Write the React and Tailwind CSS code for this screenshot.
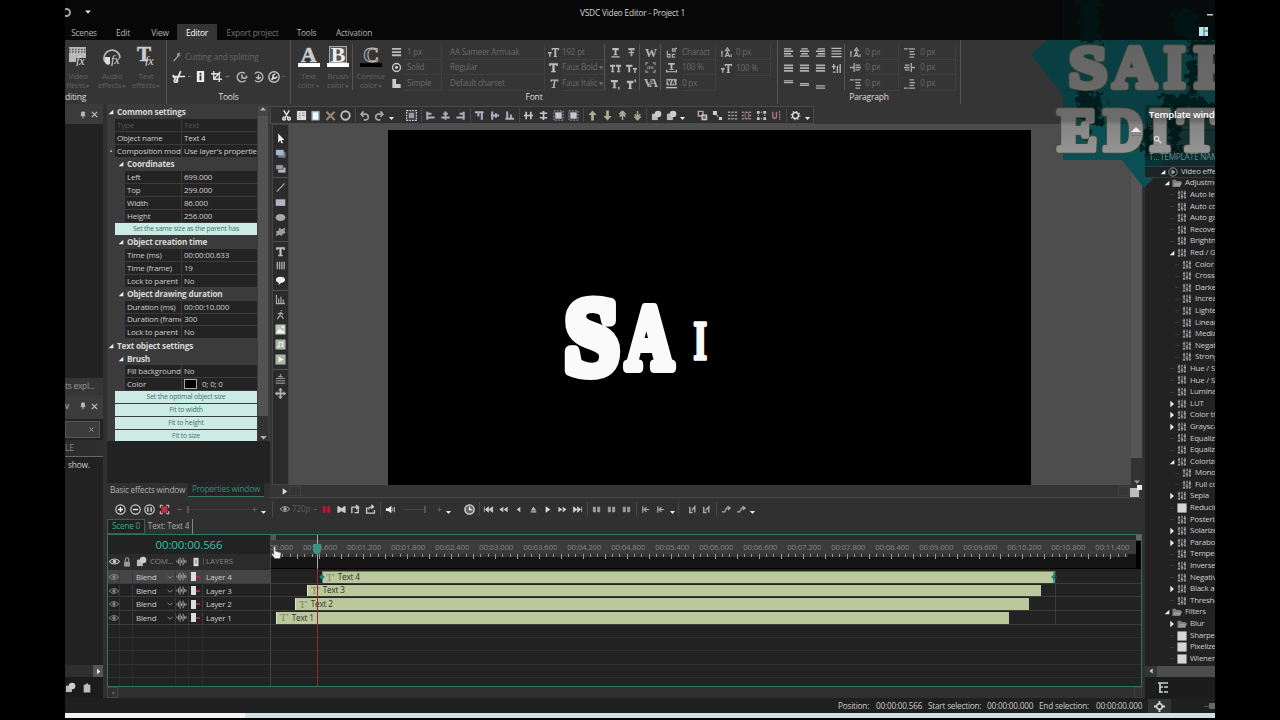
// 12x12 glyphs, drawn with the current text colour
const glyphs = {
  cut: <path d="M3 .5L7.500 8M9 .5L4.500 8M3.300 8a1.500 1.500 0 1 0 .1 0M8.700 8a1.500 1.500 0 1 0 .1 0" fill="none" stroke="#e4e4e4" strokeWidth="1.600" />,
  copy: <><path d="M1 1h10v10H1z" fill="#dcdcdc" /><path d="M3 3.500h2M6.500 3.500h3M3 6h2M6.500 6h3M3 8.500h2" stroke="#888" /></>,
  paste: <><path d="M1.500 1h9v10.500h-9z" fill="#8fa9b8" /><path d="M3 2.500h6v8H3z" fill="#f4f8fa" /></>,
  cross: <path d="M1.500 2l9 9M10.500 2l-9 9" stroke="#94867a" strokeWidth="2.400" />,
  x: <path d="M2.500 2.500l7 7M9.500 2.500l-7 7" stroke="currentColor" strokeWidth="1.700" />,
  ring: <circle cx="6" cy="6" r="4.600" fill="none" stroke="#b4bfc8" strokeWidth="2" />,
  undo: <path d="M2.500 4.500h5a3.200 3.200 0 0 1 0 6.300H5M5 1.500L2.200 4.500 5 7.500" fill="none" stroke="#a3aaa1" strokeWidth="1.700" />,
  redo: <path d="M9.500 4.500h-5a3.200 3.200 0 0 0 0 6.300H7M7 1.500l2.800 3L7 7.500" fill="none" stroke="#a3aaa1" strokeWidth="1.700" />,
  drop: <path d="M2.500 6.500h7L6 10.500z" fill="#e4e4e4" />,
  dash: <path d="M4 6h4" stroke="#777" strokeWidth="1.200" />,
  select: <><path d="M.7.700h10.600v10.600H.7z" fill="none" stroke="#ccc" strokeWidth="1.400" strokeDasharray="2 1" /><path d="M3 3h6v6H3z" fill="#9a9aaa" /></>,
  alignL: <path d="M2.500 2v8.500M2.500 4.200h4.500M2.500 8.300h8" stroke="#a9afb9" strokeWidth="2.200" />,
  alignC: <path d="M6 1.500v9M3.500 4.200h5M1.500 8.300h9" stroke="#a9afb9" strokeWidth="2.200" />,
  alignR: <path d="M9.500 2v8.500M5 4.200h4.500M1.500 8.300h8" stroke="#a9afb9" strokeWidth="2.200" />,
  alignT: <path d="M1 2.500h9.500M4.800 2.500v4.500M8.500 2.500v8" stroke="#a9afc9" strokeWidth="2.200" />,
  alignM: <path d="M3.500 1.500v9M7.500 3.500v5M2 6h9" stroke="#a9afc9" strokeWidth="2.200" />,
  alignB: <path d="M1.500 9.500h9.500M3.500 1.500v8M7.500 5v4.500" stroke="#a9afc9" strokeWidth="2.200" />,
  spaceH: <path d="M1 6h10M3.500 2v8M8.500 2v8" stroke="#c3c8d0" strokeWidth="1.800" />,
  spaceV: <path d="M6 1v10M2 3.500h8M2 8.500h8" stroke="#c3c8d0" strokeWidth="1.800" />,
  box: <><path d="M1 1h10v10H1z" fill="none" stroke="#aaa" strokeDasharray="2 1.300" /><path d="M2.500 2.500h7v7h-7z" fill="#c2c8d2" /></>,
  up: <path d="M6 .5l4.500 5H7.500V11.500H4.500V5.500H1.500z" fill="#9fb296" />,
  down: <path d="M6 11.500l4.500-5H7.500V.5H4.500v6H1.500z" fill="#9fb296" />,
  top: <path d="M6 1L2.500 5M6 1l3.500 4M6 3.500L3 7.500M6 3.500l3 4M6 2v9" stroke="#9fb296" strokeWidth="1.600" />,
  bottom: <path d="M6 11L2.500 7M6 11l3.500-4M6 8.500L3 4.500M6 8.500l3-4M6 10V1" stroke="#a3a98e" strokeWidth="1.600" />,
  shapes: <><path d="M1 4h6.500v7H1z" fill="#bbb" /><circle cx="7.700" cy="4.300" r="3.600" fill="#ccc" /></>,
  group: <><path d="M1.500 1.500h5v5h-5z" fill="none" stroke="#b9a2a8" strokeWidth="1.600" /><path d="M5.500 5.500h5v5h-5z" fill="#777" stroke="#d5c5c8" strokeWidth="1.400" /></>,
  ungroup: <><path d="M1 1h4.500v4.500H1zM7.500 7.500H11V11H7.500z" fill="#ccc" /><path d="M5 6.500h2" stroke="#b08b8b" strokeWidth="2" /></>,
  grid: <path d="M1 2.500h2.600M4.700 2.500h2.600M8.400 2.500H11M1 6h2.600M4.700 6h2.600M8.400 6H11M1 9.500h2.600M4.700 9.500h2.600M8.400 9.500H11" stroke="#999" strokeWidth="1.600" />,
  gridRed: <><path d="M1 2.500h2M5 2.500h2M9 2.500h2M1 6h2M9 6h2M1 9.500h2M5 9.500h2M9 9.500h2" stroke="#999" strokeWidth="1.500" /><path d="M4.500 2v8M8 2v8" stroke="#a87880" /></>,
  corners: <path d="M1 1h3v3H1zM8 1h3v3H8zM1 8h3v3H1zM8 8h3v3H8zM5.300 2h1.300v1H5.300zM5.300 9h1.300v1H5.300zM2 5.300h1v1.300H2zM9 5.300h1v1.300H9z" fill="#c8c8c8" />,
  magnet: <><path d="M2 2v5a2 2 0 0 0 4 0V2" fill="none" stroke="#a86f78" strokeWidth="1.700" /><path d="M9.500 1v10" stroke="#999" strokeWidth="1.300" strokeDasharray="2 1" /></>,
  gear: <><circle cx="6" cy="6" r="3.300" fill="none" stroke="#ddd" strokeWidth="1.500" /><circle cx="6" cy="6" r="4.700" fill="none" stroke="#ddd" strokeWidth="1.200" strokeDasharray="1.400 2.290" /></>,
  pointer: <path d="M3.500 .5v10l2.300-2.300 1.400 3.300 1.500-.7-1.500-3.200h3z" fill="#f2f2f2" />,
  layers: <><path d="M3.500 4.500h8v6h-8z" fill="#747d86" /><path d="M1 2h8.500v6H1z" fill="#a3b6c4" /></>,
  layers2: <><path d="M3.500 5h8v5.500h-8z" fill="#b9b9c4" /><path d="M1 2h8v5H1z" fill="#9998a8" stroke="#333" strokeWidth=".6" /></>,
  line: <path d="M2 10.500l8.500-9" stroke="#aaa" strokeWidth="1.300" />,
  rect: <path d="M.8 2.500h10.400v7.200H.8z" fill="#b6b2c2" />,
  oval: <ellipse cx="6" cy="6" rx="5.300" ry="3.700" fill="#a3aba1" />,
  blob: <path d="M1 6l3-1 .5-3 3 1.500L11 2l-.5 3.500L11.500 8l-3 .5-1 2.500-2.500-1.500L1 11l.8-3z" fill="#94a393" />,
  text: <path d="M1.500 1.500h9V4H9.300l-.5-1H6.900v7h1.300v1H3.800v-1h1.300V3H3.200l-.5 1H1.500z" fill="#c9c9c9" stroke="#c9c9c9" strokeWidth=".5" />,
  bars: <path d="M2.500 2v8M5 2v8M7.500 2v8M10 2v8" stroke="#aaa" strokeWidth="1.500" />,
  bubble: <path d="M6 2c3 0 5 1.400 5 3.300S9 8.600 6.500 8.700L4 10.800l.2-2.300C2.300 8.100 1 6.900 1 5.300 1 3.400 3 2 6 2z" fill="#eee" />,
  chart: <path d="M1.500 1v9.500H11M4 10V5M6.500 10V3M9 10V6" fill="none" stroke="#aaa" strokeWidth="1.300" />,
  run: <path d="M7 1v1.500M6.500 4L5 7.500l-2.500 3.500M5.500 7L8 8.500 9 11M3 5.500L6.500 4 9 6" fill="none" stroke="#aaa" strokeWidth="1.300" />,
  image: <><path d="M.5.500h11v11H.5z" fill="#b9c6b6" /><path d="M1 10l4-5 3 3 1-1 2 3z" fill="#f6f6f6" /><circle cx="8.500" cy="3.500" r="1.200" fill="#fff" /></>,
  music: <><path d="M.5.500h11v11H.5z" fill="#a9b6a4" /><path d="M4.500 8.500V3.500h4V8" fill="none" stroke="#eee" strokeWidth="1.200" /><path d="M2.800 7.500h2v2h-2zM6.800 7h2v2h-2z" fill="#eee" /></>,
  video: <><path d="M.5.500h11v11H.5z" fill="#a9b6a4" /><path d="M4 3l5 3-5 3z" fill="#fff" /></>,
  levels: <path d="M1 6h10M1 8.500h10M1 11h10M6 1v4M3.500 4h5" stroke="#8d978d" strokeWidth="1.200" />,
  move: <path d="M6 0l2 2.500H6.700v2.800h2.800V4L12 6 9.500 8V6.700H6.700v2.800H8L6 12 4 9.500h1.300V6.700H2.500V8L0 6l2.500-2v1.300h2.800V2.500H4z" fill="#b5b5b5" stroke="#b5b5b5" strokeWidth=".5" />,
  locate: <><circle cx="6" cy="6" r="3" fill="none" stroke="#ddd" strokeWidth="1.500" /><path d="M6 0v3M6 9v3M0 6h3M9 6h3" stroke="#ddd" strokeWidth="2" /></>,
  zoomIn: <><circle cx="6" cy="6" r="5.100" fill="none" stroke="#ccc" strokeWidth="1.300" /><path d="M3.300 6h5.400M6 3.300v5.400" stroke="#eee" strokeWidth="1.500" /></>,
  zoomOut: <><circle cx="6" cy="6" r="5.100" fill="none" stroke="#ccc" strokeWidth="1.300" /><path d="M3.300 6h5.400" stroke="#eee" strokeWidth="1.500" /></>,
  zoomFit: <><circle cx="6" cy="6" r="5.100" fill="none" stroke="#ccc" strokeWidth="1.300" /><path d="M4.200 3.500v5M7.800 3.500v5" stroke="#ccc" strokeWidth="1.600" /></>,
  rec: <><path d="M3 2.500h6v7H3z" fill="#c2304c" /><path d="M1.500 4V1.500H4M8 1.500h2.500V4M10.500 8v2.500H8M4 10.500H1.500V8" fill="none" stroke="#d8a5ae" strokeWidth="1.300" /></>,
  eye: <><path d="M.5 6C3 2.300 9 2.300 11.500 6 9 9.700 3 9.700.5 6z" fill="none" stroke="currentColor" strokeWidth="1.200" /><circle cx="6" cy="6" r="2" fill="currentColor" /></>,
  pause: <path d="M2 2.500h3.200v7H2zM6.800 2.500H10v7H6.800z" fill="#c9102e" />,
  bow: <path d="M1.500 2.500h1.700L6 4.500l2.800-2h1.700v7H8.800L6 7.500l-2.800 2H1.500z" fill="#ccc" />,
  loop: <path d="M2 10V3.500h7v6H5M6.500 1l3 2.500-3 2" fill="none" stroke="#ccc" strokeWidth="1.400" />,
  share: <path d="M3 4.500H1.700V10h8.600V6.500M4 6c0-3 2-3 5-3M7 .8l2.300 2.200L7 5.200" fill="none" stroke="#ccc" strokeWidth="1.400" />,
  speaker: <><path d="M1 4.500h2.500L7 2v8L3.500 7.500H1z" fill="#eee" /><path d="M8.500 4v4M10.300 3v6" stroke="#bbb" /></>,
  clock: <><circle cx="6" cy="6" r="5" fill="#666" stroke="#ddd" strokeWidth="1.500" /><path d="M6 3v3.200h2.500" fill="none" stroke="#fff" strokeWidth="1.300" /></>,
  first: <path d="M1.500 3v6M6 3v6L2.500 6zM10.500 3v6L6.500 6z" fill="#ccc" stroke="#ccc" strokeWidth=".8" />,
  rew: <path d="M5.800 3v6L1.500 6zM10.500 3v6L6.200 6z" fill="#ccc" />,
  prev: <path d="M8 3v6L4 6z" fill="#ccc" />,
  stop: <path d="M6 3l3 4H3zM3 8h6v1.300H3z" fill="#bbb" />,
  play: <path d="M4 2.500v7L9 6z" fill="#ddd" />,
  ffw: <path d="M6.200 3v6l4.300-3zM1.500 3v6l4.300-3z" fill="#ccc" />,
  last: <path d="M10.500 3v6M6 3v6l3.500-3zM1.500 3v6l4-3z" fill="#ccc" stroke="#ccc" strokeWidth=".8" />,
  split: <path d="M2 3h3.300v6H2zM6.700 3H10v6H6.700z" fill="#999" />,
  markIn: <path d="M3 2.500v7M4.500 6H10M7 3.500L4.500 6 7 8.500" fill="none" stroke="#aaa" strokeWidth="1.300" />,
  stairs: <path d="M3 3v6.300h3M5 7l3.500-4v6.300" fill="none" stroke="#aaa" strokeWidth="1.500" />,
  wave: <path d="M1 8.500h3l2-4h4M7 2.500l3 2-2.500 2" fill="none" stroke="#aaa" strokeWidth="1.300" />,
  minus: <path d="M3.500 6h5" stroke="#666" strokeWidth="1.200" />,
  plus: <path d="M3.500 6h5M6 3.500v5" stroke="#5c5c5c" strokeWidth="1.200" />,
  pin: <path d="M4 1.500h4v5H4zM2.500 7h7M6 7v4" fill="#bbb" stroke="#bbb" strokeWidth="1.400" />,
  sliders: <path d="M2.500 1v10M6 1v10M9.500 1v10M1 3.500h3M4.500 7.500h3M8 4h3M1 9.500h3M8 8.500h3" stroke="#a5a5a5" strokeWidth="1.400" strokeDasharray="2.800 .6" />,
  folder: <><path d="M.5 10.500V2h4l1 1.500h5V5H3z" fill="#7d7d7d" /><path d="M3 5h9l-2.200 5.500H.5z" fill="#999" /></>,
  white: <path d="M.5.500h11v11H.5z" fill="#d5d5d5" />,
  playRing: <><circle cx="6" cy="6" r="5" fill="none" stroke="#888" strokeWidth="1.200" /><path d="M4.300 3v6L9 6z" fill="#aaa" /></>,
  search: <><circle cx="4.800" cy="4.800" r="3" fill="none" stroke="#ddd" strokeWidth="1.500" /><path d="M7 7l4 4" stroke="#ddd" strokeWidth="2" /></>,
  open: <path d="M9.500 2.500v7H2.500z" fill="#eee" />,
  closed: <path d="M3.500 1v10L9 6z" fill="#eee" />,
  audio: <path d="M1 5v2M2.700 3.500v5M4.400 1.500v9M6.100 4v4M7.800 2v8M9.500 4v4M11 5v2" stroke="#a0a0a0" strokeWidth="1.100" />,
  lock: <><path d="M2.500 5.500h7v6h-7z" fill="#999" /><path d="M4 5.500V3a2 2 0 0 1 4 0v2.500" fill="none" stroke="#999" strokeWidth="1.300" /></>,
  page: <><path d="M3 1h6v10H3z" fill="#ddd" /><path d="M5 3h2v5H5z" fill="#999" /></>,
  chevron: <path d="M3 4.500l3 3 3-3" fill="none" stroke="#888" strokeWidth="1.200" />,
  trash: <path d="M4.500.5h3V2H10v9.500H2V2h2.500z" fill="#bbb" />,
  lines: <path d="M1 2h10M1 5.500h10M1 9h10" stroke="#bbb" strokeWidth="2" />,
  target: <><circle cx="6" cy="6" r="4.300" fill="none" stroke="#ccc" strokeWidth="1.500" /><circle cx="6" cy="6" r="1.600" fill="#ddd" /></>,
  corner: <path d="M1.500 1h4v5.500h5V11h-9z" fill="#ccc" />,
  textSize: <path d="M4 1h8v2.500h-1L10.500 2.500H9V10h1v1H6v-1h1V2.500H5.500L5 3.500H4zM0 5.500h4V7H2.700v3.500H1.300V7H0z" fill="#bbb" />,
  italic: <path d="M3 1.500h8.500L11 4H9.800l.1-1H8.300L7 10h1.200L8 11H3.800L4 10h1.200L6.500 3H4.500L4 4H2.600z" fill="#b5b5b5" />,
  under: <path d="M2.500 1h7v2.500H7V8h1v1H4V8h1V3.500H2.500zM1.500 10.200h9v1.300h-9z" fill="#bbb" />,
  strike: <path d="M2.500 1h7v2.500H7V10H5V3.500H2.500zM3 5.500h6v1.200H3z" fill="#aaa" />,
  caps: <path d="M0 2h5.500v2H3.700v5h1v1H1v-1h1V4H0zM6.500 2H12v2h-1.700v5h1v1h-3.800v-1h1V4h-2z" fill="#bbb" />,
  smallCaps: <path d="M0 2h7v2H4.500v6h-2V4H0zM7.500 5.500H12V7h-1.500v4H9V7H7.500z" fill="#bbb" />,
  sub: <path d="M1 1h7.500v2.500H6V9h1v1H2.700V9h1V3.500H1zM9 8.500h1.500v3H9z" fill="#bbb" />,
  sup: <path d="M1 2h7v2.500H5.800V10h1v1H2.300v-1h1V4.500H1zM9.300 .5h1.500v3H9.300z" fill="#bbb" />,
  frame: <><path d="M1 3.500V1h2.500M8.500 1H11v2.500M11 8.500V11H8.500M3.500 11H1V8.500" fill="none" stroke="#999" strokeWidth="1.200" /><path d="M2.500 6h7" stroke="#888" strokeWidth="3" strokeDasharray="1.200 .6" /></>,
  stretch: <path d="M2.500 1h7v2H7v4.500h1.500v1h-5v-1H5V3H2.500zM0 10h12v1.300H0zM0 8.500h1.300v3H0zM10.700 8.500H12v3h-1.300z" fill="#bbb" />,
  tracking: <><path d="M.5 1h11v7H.5z" fill="#aaa" /><path d="M2 2.500l1.500 4L5 2.500M6.500 7L8 3l1.500 4" fill="none" stroke="#353535" strokeWidth="1.200" /><path d="M0 10.500h12" stroke="#bbb" strokeWidth="1.500" /></>,
  shift: <path d="M1.500 4v7M1.500 8h3v3h-3M10 8H7v3h3M7 2h3v2.500H7zM10.500 1.500h2" fill="none" stroke="#aaa" strokeWidth="1.300" />,
  tl: <path d="M1 2h8M1 4.700h10M1 7.400h8M1 10h10" stroke="#bbb" strokeWidth="1.500" />,
  tc: <path d="M2.500 2h7M1 4.700h10M2.500 7.400h7M1 10h10" stroke="#bbb" strokeWidth="1.500" />,
  tr: <path d="M3 2h8M1 4.700h10M3 7.400h8M1 10h10" stroke="#bbb" strokeWidth="1.500" />,
  tj: <path d="M.5 1.500h11M.5 4.500h11M.5 7.500h11M.5 10.500h11" stroke="#bbb" strokeWidth="1.500" />,
  jl: <path d="M1 2.500h10M1 5.500h10M1 8.500h10" stroke="#b0b0b0" strokeWidth="2" />,
  vt: <path d="M1 2h10M1 4h10" stroke="#b0b0b0" strokeWidth="1.200" />,
  vm: <path d="M1 5h10M1 7h10" stroke="#b0b0b0" strokeWidth="1.200" />,
  vb: <path d="M1 7.500h10M1 10h10" stroke="#b0b0b0" strokeWidth="1.200" />,
  vjust: <path d="M3 1v6M1 4h4M2 10h3M7 3v8M10 1v10" stroke="#bbb" strokeWidth="1.500" />,
  indent: <path d="M0 2h4M5 2h7M6 5h5M6 8h6M6 11h5" stroke="#aaa" strokeWidth="1.400" />,
  indentIn: <path d="M0 6h4M4.500 1v10M6 3.500h5M6 6h6M6 8.500h5" stroke="#aaa" strokeWidth="1.400" />,
  indentOut: <path d="M12 6H8M8 1v10M1 3.500h5M0 6h6M1 8.500h5" stroke="#aaa" strokeWidth="1.400" />,
  after: <path d="M0 11h4M5 11h7M6 8h5M6 5h6M6 2h5" stroke="#aaa" strokeWidth="1.400" />,
  before: <path d="M1 4v7M0 6h2M5 4l2-3 2 3zM4.500 11L7 5.500 9.500 11M5 9.500h4M11 8v3" fill="none" stroke="#aaa" strokeWidth="1.300" />,
  scissors: <path d="M1 6h11M4 10.500L8 1M1.500 4.500a1.500 1.500 0 1 0 2.500 2M3.500 8.500a1.500 1.500 0 1 0 1.500 1" fill="none" stroke="#e4e4e4" strokeWidth="1.600" />,
  info: <><path d="M2 0h8v12H2z" fill="#eee" /><path d="M5 2h2v2H5zM5 5h2v5H5z" fill="#333" /></>,
  crop: <path d="M3 0v9h9M0 3h9v9M3 9l7-8" fill="none" stroke="#ddd" strokeWidth="1.500" />,
  rotL: <path d="M9.500 9.300A4.700 4.700 0 1 1 9 2.500M6 3.500V7h4.500M10.500 4.500V7" fill="none" stroke="#b0bac2" strokeWidth="1.500" />,
  rotR: <path d="M3 2.500A4.700 4.700 0 1 1 3 9.500M6.500 3.500V8M4 6l2.500 2L9 6" fill="none" stroke="#b0bac2" strokeWidth="1.500" />,
  wrench: <><circle cx="6" cy="6" r="5.200" fill="none" stroke="#b9c6bd" strokeWidth="1.400" /><path d="M3.500 8.700L6.300 6" stroke="#ddd" strokeWidth="2" /><path d="M7.300 3.300a2 2 0 1 0 1.600 2.100" fill="none" stroke="#ddd" strokeWidth="1.500" /></>,
  slash: <path d="M2 11l6-7M7 1.500v3h3M9.500 1L7 4" fill="none" stroke="#aaa" strokeWidth="1.400" />,
  tree: <path d="M1 1h10M3 1v10M3 5h3M3 10h3M7 5h4M7 10h4" stroke="#c9cfc9" strokeWidth="1.700" />,
};

function I({ n, c = "size-[11px]" }) {
  return (
    <svg viewBox="0 0 12 12" className={`shrink-0 ${c}`}>
      {glyphs[n]}
    </svg>
  );
}

// "|" is a divider, "v" the small overflow arrow
function IconRow({ items }) {
  return items.map((n, i) =>
    n === "|" ? (
      <div key={i} className="flex w-[4.6px] shrink-0 justify-center">
        <div className="h-[14px] w-px bg-[#484848]" />
      </div>
    ) : n === "v" ? (
      <div key={i} className="flex w-2 shrink-0 justify-center pt-[3px]">
        <I n="drop" c="size-[9px]" />
      </div>
    ) : (
      <div key={i} className="flex w-[14.8px] shrink-0 justify-center">
        <I n={n} />
      </div>
    )
  );
}

function TitleBar() {
  return (
    <div className="flex h-6 shrink-0 items-center bg-[#070707] text-[8.5px] text-[#d5d5d5]">
      <div className="ml-[-3px] size-[9px] shrink-0 rounded-full border-2 border-[#aaa39b]" />
      <div className="ml-[12px] pb-[4px]"><I n="drop" c="size-[10px]" /></div>
      <div className="ml-[487px] mt-[3px] w-[110px] whitespace-nowrap text-[8.3px]">VSDC Video Editor - Project 1</div>
    </div>
  );
}

const tabs = [
  ["Scenes", "w-[38px]"],
  ["Edit", "w-[40px]"],
  ["View", "w-[34px]"],
  ["Editor", "w-[40px] bg-[#353535] text-white"],
  ["Export project", "w-[71px] text-[#747474]"],
  ["Tools", "w-[37px]"],
  ["Activation", "w-[58px]"],
];

function Tabs() {
  return (
    <div className="flex h-4 shrink-0 bg-[#070707] text-[8.300px] text-[#b5b5b5]">
      {tabs.map(([t, c]) => (
        <div key={t} className={`flex items-center justify-center whitespace-nowrap pt-[2px] ${c}`}>{t}</div>
      ))}
    </div>
  );
}

function Group({ label, className, children }) {
  return (
    <div className={`flex shrink-0 flex-col border-r border-[#555] ${className}`}>
      <div className="flex h-[51px]">{children}</div>
      <div className="flex h-[12px] items-center justify-center text-[8.500px] text-[#ddd]">{label}</div>
    </div>
  );
}

function Big({ icon, a, b, className }) {
  return (
    <div className={`flex shrink-0 flex-col items-center pt-[6px] text-[7.900px] leading-[8.500px] text-[#606060] ${className}`}>
      <div className="flex h-[26px] justify-center">{icon}</div>
      <div>{a}</div>
      <div className="whitespace-nowrap">{b}<span className="text-[5px]">▼</span></div>
    </div>
  );
}

function Letter({ t, bar, className = "" }) {
  return (
    <div className="flex w-[22px] flex-col items-center">
      <div className={`flex h-[17px] items-center font-['Liberation_Serif',serif] text-[22px] font-bold leading-none ${className}`}>{t}</div>
      <div className={`h-1 w-[22px] ${bar}`} />
    </div>
  );
}

function Fields({ rows, icon = "w-[19px]", text }) {
  return (
    <div className="flex shrink-0 flex-col pt-[5px]">
      {rows.map(([n, t], i) => (
        <div key={i} className="flex h-[15.800px] items-center">
          <div className={`flex justify-center ${icon}`}>{n && <I n={n} />}</div>
          <div className={`flex h-[15px] items-center overflow-hidden whitespace-nowrap text-[8.100px] text-[#6a6a6a] ${t ? "border-b border-[#404040]" : ""} ${text}`}>{t}</div>
        </div>
      ))}
    </div>
  );
}

function IconGrid({ rows, cell }) {
  return (
    <div className="flex shrink-0 flex-col pt-[5px]">
      {rows.map((r, i) => (
        <div key={i} className="flex h-[15.800px] items-center">
          {r.map((n, j) => (
            <div key={j} className={`flex justify-center ${cell}`}>
              {n.length === 1 || n === "VA" ? (
                <span className="font-['Liberation_Serif',serif] text-[12px] font-bold leading-none tracking-[-2px] text-[#b5b5b5]">{n}</span>
              ) : (
                <I n={n} />
              )}
            </div>
          ))}
        </div>
      ))}
    </div>
  );
}

const Sep = () => <div className="mt-[4px] h-[46px] w-px shrink-0 bg-[#555]" />;

function Ribbon() {
  return (
    <div className="flex h-16 shrink-0 bg-[#353535]">
      <Group className="w-[102px]" label={<span className="mr-auto">diting</span>}>
        <Big className="w-[26px]" a="Video" b="ffects" icon={
          <svg viewBox="0 0 20 20" className="size-[20px]">
            <path d="M1 1h17v15H1z" fill="#b9b9b9" />
            <path d="M1 3.500h17M1 6h17" stroke="#555" strokeWidth="1.300" strokeDasharray="1.500 1.500" />
            <path d="M8 12h10v8H8z" fill="#353535" />
            <text x="8" y="19" fontSize="12" fontStyle="italic" fontFamily="Liberation Serif" fill="#ddd">fx</text>
          </svg>
        } />
        <Big className="w-[42px]" a="Audio" b="effects" icon={
          <svg viewBox="0 0 20 20" className="size-[20px]">
            <path d="M3 16a8 8 0 1 1 15-4" fill="none" stroke="#b9b9b9" strokeWidth="1.600" />
            <path d="M3 11v5a3 3 0 0 0 5 2v-7z" fill="#ddd" />
            <text x="9" y="18" fontSize="12" fontStyle="italic" fontFamily="Liberation Serif" fill="#ddd">fx</text>
          </svg>
        } />
        <Big className="w-[26px]" a="Text" b="effects" icon={
          <svg viewBox="0 0 20 20" className="size-[20px]">
            <text x="1" y="15" fontSize="21" fontWeight="700" fontFamily="Liberation Serif" fill="#ccc" stroke="#ccc" strokeWidth=".6">T</text>
            <text x="9" y="19" fontSize="12" fontStyle="italic" fontFamily="Liberation Serif" fill="#ddd">fx</text>
          </svg>
        } />
      </Group>
      <Group className="w-[124px]" label="Tools">
        <div className="flex flex-col pl-[5px]">
          <div className="mt-[9px] flex h-4 items-center gap-[3px] whitespace-nowrap text-[8.300px] text-[#666]">
            <I n="slash" c="size-[10px]" />Cutting and splitting
          </div>
          <div className="mt-[5px] flex items-center">
            <I n="scissors" c="size-[13px]" /><I n="dash" c="size-[9px]" /><I n="info" c="ml-[1px] size-[11px]" />
            <I n="crop" c="ml-[5px] size-[11px]" /><I n="dash" c="size-[11px]" />
            <I n="rotL" c="ml-[3px] size-[12px]" /><I n="rotR" c="ml-[4px] size-[12px]" /><I n="wrench" c="ml-[4px] size-[12px]" />
            <I n="dash" c="size-[7px]" />
          </div>
        </div>
      </Group>
      <Group className="w-[487px]" label="Font">
        <Big className="ml-[2px] w-[31px]" a="Text" b="color" icon={<Letter t="A" bar="bg-white" className="text-[#ccc] [-webkit-text-stroke:0.6px_#ccc]" />} />
        <Big className="w-[28px]" a="Brush" b="color" icon={<Letter t="B" bar="bg-white" className="w-[18px] justify-center border border-[#aaa] bg-[#555] text-[#eee]" />} />
        <Sep />
        <Big className="w-[36px]" a="Contour" b="color" icon={<Letter t="C" bar="bg-black" className="text-[#353535] [-webkit-text-stroke:1px_#bbb]" />} />
        <Fields icon="w-[15px]" text="w-[38px] border-r pl-[3px]" rows={[["lines", "1 px"], ["target", "Solid"], ["corner", "Simple"]]} />
        <Fields icon="w-[5px]" text="w-[98px] border-r pl-[3px]" rows={[[null, "AA Sameer Armaak"], [null, "Regular"], [null, "Default charset"]]} />
        <Fields icon="w-[17px]" text="w-[42px]" rows={[["textSize", "192 pt"], ["text", "Faux Bold ▾"], ["italic", "Faux Italic ▾"]]} />
        <Sep />
        <div className="ml-[2px]"><IconGrid cell="w-[16px]" rows={[["under", "strike"], ["caps", "smallCaps"], ["sub", "sup"]]} /></div>
        <Sep />
        <IconGrid cell="w-[20px]" rows={[["W"], ["frame"], ["VA"]]} />
        <Sep />
        <Fields icon="w-[21px]" text="w-[34px] border-r" rows={[["shift", "Charact"], ["stretch", "100 %"], ["tracking", "0 px"]]} />
        <Fields icon="w-[20px]" text="w-[35px] border-r" rows={[["before", "0 px"], ["textSize", "100 %"]]} />
      </Group>
      <Group className="w-[183px]" label="Paragraph">
        <div className="ml-[3px]"><IconGrid cell="w-[15.800px]" rows={[["tl", "tc", "tr", "tj"], ["jl", "jl", "jl", "vjust"], ["vt", "vm", "vb"]]} /></div>
        <Sep />
        <Fields icon="w-[20px]" text="w-[34px] border-r" rows={[["before", "0 px"], ["indentIn", "0 px"], ["indent", "0 px"]]} />
        <Fields icon="w-[21px]" text="w-[36px] border-r" rows={[["indent", "0 px"], ["indentOut", "0 px"], ["after", "0 px"]]} />
      </Group>
    </div>
  );
}

function LeftStrip() {
  return (
    <div className="flex w-[38px] shrink-0 flex-col bg-[#222] text-[8.300px] text-[#bbb]">
      <div className="flex h-[20px] shrink-0 items-center justify-end gap-[3px] bg-[#3b3b3b] pr-[4px] pt-px">
        <I n="pin" c="size-[8px]" /><I n="x" c="size-[9px]" />
      </div>
      <div className="h-[254px] shrink-0" />
      <div className="flex h-[17px] shrink-0 items-center bg-[#353535] text-[#999]">ts expl...</div>
      <div className="flex h-[24px] shrink-0 items-center gap-[3px] bg-[#3b3b3b] pb-[2px]">
        <span className="w-[11px]">v</span><I n="pin" c="size-[8px]" /><I n="x" c="size-[9px]" />
      </div>
      <div className="mt-[2px] flex h-[17px] w-[35px] shrink-0 items-center justify-end border border-[#555] bg-[#3b3b3b] pr-[4px]">
        <I n="x" c="size-[7px] text-[#999]" />
      </div>
      <div className="mt-[2px] flex h-[17px] shrink-0 items-center border-b border-[#666] bg-[#2d2d2d] pb-px pt-[2px] text-[#888]">LE</div>
      <div className="flex h-[17px] shrink-0 items-center pl-[3px] text-[#ccc]">show.</div>
      <div className="h-[191px] shrink-0" />
      <div className="flex h-[12px] shrink-0 justify-end bg-[#2f2f2f]">
        <div className="flex w-[10px] items-center justify-center bg-[#555]"><I n="closed" c="size-[7px]" /></div>
      </div>
      <div className="flex grow items-center gap-[6px] bg-[#1b1b1b]">
        <I n="shapes" /><I n="trash" c="size-[10px]" />
      </div>
    </div>
  );
}

// [kind, label, value] - kinds: section, group, top-level row, row, button
const props = [
  ["s", "Common settings"],
  ["p", "Type", "Text"],
  ["p", "Object name", "Text 4"],
  ["p", "Composition mode", "Use layer's properties"],
  ["g", "Coordinates"],
  ["r", "Left", "699.000"],
  ["r", "Top", "299.000"],
  ["r", "Width", "86.000"],
  ["r", "Height", "256.000"],
  ["b", "Set the same size as the parent has"],
  ["g", "Object creation time"],
  ["r", "Time (ms)", "00:00:00.633"],
  ["r", "Time (frame)", "19"],
  ["r", "Lock to parent", "No"],
  ["g", "Object drawing duration"],
  ["r", "Duration (ms)", "00:00:10.000"],
  ["r", "Duration (frame)", "300"],
  ["r", "Lock to parent", "No"],
  ["s", "Text object settings"],
  ["g", "Brush"],
  ["r", "Fill background", "No"],
  ["r", "Color", "0; 0; 0"],
  ["b", "Set the optimal object size"],
  ["b", "Fit to width"],
  ["b", "Fit to height"],
  ["b", "Fit to size"],
];

function PropRow({ kind, label, value }) {
  if (kind === "b") {
    return (
      <div className="flex h-[12.970px] shrink-0 pl-2">
        <div className="mb-px flex w-[142px] items-center justify-center bg-[#cdebe5] pt-px text-[6.900px] text-[#3d746b]">{label}</div>
      </div>
    );
  }
  if (kind === "s" || kind === "g") {
    return (
      <div className={`flex h-[12.970px] shrink-0 items-center gap-[2px] whitespace-nowrap text-[8.200px] font-bold text-[#d8d8d8] ${kind === "g" ? "pl-[10px]" : "pl-0"}`}>
        <I n="open" c="size-[8px]" />{label}
      </div>
    );
  }
  const dim = label === "Type" ? "text-[#555]" : "text-[#ccc]";
  return (
    <div className={`flex h-[12.970px] shrink-0 whitespace-nowrap text-[8px] ${dim} ${kind === "p" ? "pl-0" : "pl-[10px]"}`}>
      <div className="flex w-2 items-center justify-center">{label.startsWith("Comp") && "•"}</div>
      <div className={`mb-px flex items-center overflow-hidden bg-[#232323] pl-[2px] ${kind === "p" ? "w-[66px]" : "w-[56px]"}`}>{label}</div>
      <div className="mb-px ml-px flex w-[75px] items-center overflow-hidden bg-[#232323] pl-[2px]">
        {label === "Color" && <div className="mr-[5px] h-[10px] w-[13px] border border-[#aaa] bg-black" />}
        {value}
      </div>
    </div>
  );
}

function Properties() {
  return (
    <div className="flex w-[163px] shrink-0 flex-col bg-[#222]">
      <div className="flex h-[337px] shrink-0 overflow-hidden bg-[#3b3b3b] pt-[2px]">
        <div className="flex w-[151px] flex-col">
          {props.map(([k, l, v], i) => <PropRow key={i} kind={k} label={l} value={v} />)}
        </div>
        <div className="flex w-[10px] flex-col items-center bg-[#525252]">
          <div className="flex h-[10px] w-full justify-center bg-[#454545]"><I n="drop" c="size-[10px] rotate-180 opacity-70" /></div>
          <div className="h-[300px] shrink-0" />
          <div className="flex w-full grow items-end justify-center bg-[#333]"><I n="drop" c="size-[11px] opacity-70" /></div>
        </div>
      </div>
      <div className="h-[42px] shrink-0" />
      <div className="flex h-[14px] items-stretch bg-[#303030] text-[8.200px] text-[#b0b0b0]">
        <div className="flex w-[81px] items-center justify-center whitespace-nowrap">Basic effects window</div>
        <div className="flex w-[76px] items-center justify-center whitespace-nowrap border-b border-[#2d7b6c] bg-[#242424] text-[#348d7c]">Properties window</div>
      </div>
      <div className="grow bg-[#303030]" />
    </div>
  );
}

const topTools = ["cut", "copy", "paste", "cross", "ring", "|", "undo", "redo", "v"];
const alignTools = ["select", "|", "alignL", "alignC", "alignR", "|", "alignT", "alignM", "alignB", "|", "spaceH", "spaceV", "box", "box", "|", "up", "down", "top", "bottom", "|", "shapes", "shapes", "v"];
const gridTools = ["group", "ungroup", "grid", "gridRed", "corners", "magnet", "|", "gear", "v"];
const sideTools = ["pointer", "layers", "layers2", "|", "line", "rect", "oval", "blob", "|", "text", "bars", "bubble", "|", "chart", "run", "image", "music", "video", "|", "levels", "move"];

const logo = [
  { ch: "S", x: 565, y: 373, size: 109, w: 54, stroke: 12 },
  { ch: "A", x: 626, y: 368, size: 90, w: 47, stroke: 10 },
  { ch: "I", x: 693.5, y: 359, size: 55, w: 13.5, stroke: 3.5 },
];

function Stage() {
  return (
    <div className="flex w-[872px] shrink-0 flex-col bg-[#353535]">
      <div className="mt-[2px] flex h-[18px] w-[544px] shrink-0 items-center border border-[#4a4a4a] bg-[#303030] pl-[8px]">
        <IconRow items={topTools} />
        <div className="w-[9px]" />
        <IconRow items={alignTools} />
        <div className="w-[8.500px]" />
        <IconRow items={gridTools} />
      </div>
      <div className="flex h-[361px] shrink-0">
        <div className="ml-[2px] flex w-[17px] shrink-0 flex-col items-center border border-[#444] bg-[#2b2b2b] pt-[6px] text-[#ccc]">
          {sideTools.map((n, i) =>
            n === "|" ? (
              <div key={i} className="flex h-[4.200px] w-full items-center"><div className="h-px w-full bg-[#505050]" /></div>
            ) : (
              <div key={i} className="flex h-[14.900px] items-center"><I n={n} /></div>
            )
          )}
        </div>
        <div className="flex w-[842px] shrink-0 bg-[#4d4d4d] pl-[99px] pt-[6px]">
          <svg viewBox="388 130 643 355" className="h-[355px] w-[643px] shrink-0 bg-black font-['Liberation_Serif',serif] font-bold">
            {logo.map((g) => (
              <text key={g.ch} x={g.x} y={g.y} fontSize={g.size} strokeWidth={g.stroke} textLength={g.w} lengthAdjust="spacingAndGlyphs" fill="#fafafa" stroke="#fafafa" strokeLinejoin="round" className="tracking-[0px]">{g.ch}</text>
            ))}
          </svg>
        </div>
        <div className="flex w-[11px] shrink-0 flex-col items-center bg-[#565656]">
          <div className="flex h-[20px] w-full shrink-0 items-end justify-center border-b border-[#777] bg-[#484848]" />
          <div className="h-[314px] shrink-0" />
          <div className="flex w-full grow items-end justify-center bg-[#333]"><I n="drop" c="size-[10px] opacity-60" /></div>
        </div>
      </div>
      <div className="flex h-[13px] shrink-0 items-center border-b border-[#444]">
        <div className="w-[19px] pl-[9px]"><I n="play" c="size-[11px]" /></div>
        <div className="h-[10px] w-[12px] border border-[#404040]" />
        <div className="grow" />
        <div className="mr-[1px] h-[10px] w-[11px] border border-[#404040]" />
        <svg viewBox="0 0 12 12" className="size-[12px]"><path d="M0 3h9v9H0z" fill="#bbb" /><path d="M7 0h5v5H7z" fill="#eee" /></svg>
      </div>
    </div>
  );
}

function PlayBar() {
  return (
    <div className="flex h-[20px] shrink-0 items-center bg-[#303030] pl-[6px]">
      <div className="flex w-[156px] shrink-0 items-center">
        <IconRow items={["zoomIn", "zoomOut", "zoomFit", "rec", "minus"]} />
        <div className="h-[7px] w-[2px] bg-[#555]" />
        <div className="h-px w-[60px] bg-[#3c3c3c]" />
        <I n="plus" />
        <IconRow items={["v"]} />
      </div>
      <div className="mx-[3px] h-4 w-px shrink-0 bg-[#484848]" />
      <div className="flex w-[179px] shrink-0 items-center text-[8.200px] text-[#5c5c5c]">
        <div className="ml-[4px] text-[#aaa]"><I n="eye" c="size-[10px]" /></div>
        <span className="w-[22px] shrink-0 pl-[2px]">720p</span>
        <I n="dash" c="size-[7px]" />
        <IconRow items={["pause", "bow", "loop", "share", "|", "speaker"]} />
        <div className="ml-[6px] h-px w-[20px] bg-[#444]" />
        <div className="h-[7px] w-[2px] bg-[#555]" />
        <div className="w-[8px]" />
        <I n="plus" />
        <IconRow items={["v"]} />
      </div>
      <div className="w-[7px] shrink-0" />
      <IconRow items={["clock", "|", "first", "rew", "prev", "stop", "play", "ffw", "last", "|", "split", "split", "split", "|", "markIn", "markIn", "v", "|"]} />
      <div className="w-[4px]" />
      <IconRow items={["stairs", "stairs", "|", "wave", "wave", "v"]} />
    </div>
  );
}

const rulerLabels = Array.from({ length: 20 }, (_, i) => {
  const t = i * 600;
  const s = String(Math.floor(t / 1000)).padStart(2, "0");
  return `00:${s}.${String(t % 1000).padStart(3, "0")}`;
});

const layers = [
  { name: "Layer 4", text: "Text 4", start: 51, width: 733 },
  { name: "Layer 3", text: "Text 3", start: 36, width: 734 },
  { name: "Layer 2", text: "Text 2", start: 24, width: 734 },
  { name: "Layer 1", text: "Text 1", start: 5, width: 733 },
];

function LayerList() {
  return (
    <div className="flex w-[163px] shrink-0 flex-col overflow-hidden border-r border-[#444] bg-[#222]">
      <div className="flex h-[19px] shrink-0 items-center justify-center text-[11.300px] tracking-normal text-[#3fc0a6]">00:00:00.566</div>
      <div className="flex h-[16px] shrink-0 items-center bg-[#2b2b2b] pb-px text-[7.900px] text-[#858585]">
        <div className="flex w-[12px] justify-center text-[#ccc]"><I n="eye" /></div>
        <div className="flex w-[13px] justify-center"><I n="lock" c="size-[10px]" /></div>
        <div className="flex w-[16px] justify-center"><I n="shapes" /></div>
        <div className="w-[27px] pl-px">COM...</div>
        <div className="w-[13px]"><I n="audio" /></div>
        <div className="flex w-[14px] justify-center"><I n="page" c="size-[10px]" /></div>
        <div className="border-l border-[#555] pl-[2px] tracking-normal">LAYERS</div>
      </div>
      {layers.map((l, i) => (
        <div key={l.name} className={`flex h-[13.700px] shrink-0 items-stretch border-b border-[#3b3b3b] pt-px text-[8px] text-[#ccc] ${i === 0 ? "bg-[#454548]" : ""}`}>
          <div className="flex w-[12px] items-center justify-center border-r border-[#3a3a3a] text-[#888]"><I n="eye" c="size-[10px]" /></div>
          <div className="w-[13px] border-r border-[#3a3a3a]" />
          <div className="flex w-[32px] items-center pl-[3px]">Blend</div>
          <div className="flex w-[11px] items-center border-r border-[#3a3a3a]"><I n="chevron" c="size-[10px]" /></div>
          <div className="flex w-[13px] items-center border-r border-[#3a3a3a]"><I n="audio" /></div>
          <div className="flex w-[14px] items-center border-r border-[#3a3a3a]">
            <div className="ml-[2px] h-[9px] w-[5px] bg-[#ddd]" />
            <div className="h-[2px] w-[4px] bg-[#a5283c]" />
          </div>
          <div className="flex items-center pl-[3px]">{l.name}</div>
        </div>
      ))}
      {[0, 1, 2, 3, 4].map((i) => (
        <div key={i} className="flex h-[13.300px] shrink-0 items-stretch border-b border-[#333]">
          <div className="w-[12px] border-r border-[#2c2c2c]" />
          <div className="w-[13px] border-r border-[#2c2c2c]" />
          <div className="w-[43px] border-r border-[#2c2c2c]" />
          <div className="w-[13px] border-r border-[#2c2c2c]" />
          <div className="w-[14px] border-r border-[#2c2c2c]" />
        </div>
      ))}
    </div>
  );
}

function Tracks() {
  return (
    <div className="relative flex w-[870px] shrink-0 flex-col overflow-hidden bg-[#222]">
      <div className="flex h-[6px] shrink-0 justify-between border-b border-[#4a3a3d] bg-[#2a2a2a]">
        <div className="w-[5px] bg-[#555]" />
        <div className="w-[5px] bg-[#666]" />
      </div>
      <div className="h-[13px] w-[865px] shrink-0 overflow-hidden bg-[#3b3b3b]">
        <div className="ml-[-17px] flex h-full items-center text-[7.900px] text-[#858585]">
          {rulerLabels.map((t) => (
            <div key={t} className="w-[44.030px] shrink-0 text-center">{t}</div>
          ))}
        </div>
      </div>
      <div className="flex h-[15px] shrink-0 border-b border-black bg-[#151515]">
        {Array.from({ length: 117 }, (_, i) => (
          <div key={i} className="h-[3px] w-[7.340px] shrink-0 bg-[#333]">
            <div className={`ml-[4px] w-px bg-[#999] ${i % 3 === 0 ? "h-[5px]" : "h-[3px]"}`} />
          </div>
        ))}
      </div>
      <div className="h-px shrink-0 bg-[#222]" />
      {layers.map((l, i) => (
        <div key={l.name} className="flex h-[13.700px] shrink-0 items-stretch border-b border-[#3b3b3b]">
          <div
            style={{ marginLeft: l.start, width: l.width }}
            className={`mt-px flex items-center gap-[3px] border-l bg-[#bac89b] pl-[3px] text-[8.200px] text-[#333] ${i === 0 ? "border-x-2 border-t border-[#2aa08e]" : "border-[#dde6c8]"}`}
          >
            <span className="font-['Liberation_Serif',serif] text-[11px] leading-none text-[#7d886b]">T′</span>
            {l.text}
          </div>
        </div>
      ))}
      {[0, 1, 2, 3, 4].map((i) => (
        <div key={i} className="h-[13.300px] shrink-0 border-b border-[#303030]" />
      ))}
      <div className="absolute left-[46px] top-[12px] h-[140px] w-px bg-[#a02530]" />
      <div className="absolute left-[46px] top-0 h-[34px] w-px bg-[#aaa]" />
      <div className="absolute left-[42px] top-[9px] h-[10px] w-[8px] rounded-b bg-[#3d9280]" />
      <div className="absolute left-[49px] top-[40px] size-[4px] rotate-45 bg-[#1e7f72]" />
      <div className="absolute left-[781px] top-[40px] size-[4px] rotate-45 bg-[#1e7f72]" />
      <div className="absolute left-[784px] top-[36px] h-[54px] w-px bg-[#3b3b3b]" />
      <div className="absolute right-0 top-[6px] h-[28px] w-[5px] bg-black" />
    </div>
  );
}

function Timeline() {
  return (
    <div className="flex grow flex-col bg-[#303030]">
      <PlayBar />
      <div className="flex h-[15px] shrink-0 text-[8.200px]">
        <div className="flex w-[38px] items-center justify-center border border-[#3b5d56] bg-[#222] text-[#3ba18e]">Scene 0</div>
        <div className="flex w-[48px] items-center justify-center whitespace-nowrap border-r border-[#888] text-[#aaa]">Text: Text 4</div>
      </div>
      <div className="flex h-[153px] w-[1035px] shrink-0 border border-[#2f7367]">
        <LayerList />
        <Tracks />
      </div>
      <div className="flex justify-between">
        <div className="flex h-[11px] w-[11px] items-center justify-center border border-[#444]"><I n="prev" c="size-[8px] opacity-30" /></div>
        <div className="h-[11px] w-[8px] border border-[#3b3b3b]" />
      </div>
    </div>
  );
}

// [depth, icon, label, arrow]
const tree = [
  [0, "playRing", "Video effects", "open"], [1, "folder", "Adjustments", "open"],
  [2, "sliders", "Auto levels"], [2, "sliders", "Auto contrast"], [2, "sliders", "Auto gamma"],
  [2, "sliders", "Recovery"], [2, "sliders", "Brightness"], [2, "sliders", "Red / Green", "open"],
  [3, "sliders", "Color"], [3, "sliders", "Cross"], [3, "sliders", "Darken"], [3, "sliders", "Increase"],
  [3, "sliders", "Lighten"], [3, "sliders", "Linear"], [3, "sliders", "Median"], [3, "sliders", "Negative"],
  [3, "sliders", "Strong"], [2, "sliders", "Hue / Sat"], [2, "sliders", "Hue / Sat"], [2, "sliders", "Luminance"],
  [2, "sliders", "LUT", "closed"], [2, "sliders", "Color tint", "closed"], [2, "sliders", "Grayscale", "closed"],
  [2, "sliders", "Equalize"], [2, "sliders", "Equalize"], [2, "sliders", "Colorize", "open"],
  [3, "sliders", "Mono"], [3, "sliders", "Full color"], [2, "sliders", "Sepia", "closed"],
  [2, "white", "Reducing"], [2, "sliders", "Posterize"], [2, "sliders", "Solarize", "closed"],
  [2, "sliders", "Parabolize", "closed"], [2, "sliders", "Temperature"], [2, "sliders", "Inverse"],
  [2, "sliders", "Negative"], [2, "sliders", "Black and", "closed"], [2, "sliders", "Threshold"],
  [1, "folder", "Filters", "open"], [2, "folder", "Blur", "closed"],
  [2, "white", "Sharpen"], [2, "white", "Pixelize"], [2, "white", "Wiener"],
];
const indents = ["pl-[13px]", "pl-[17px]", "pl-[22px]", "pl-[27px]"];

// header texts sit above the watermark, hence the z-20
function TemplatePanel() {
  return (
    <div className="flex w-[70px] shrink-0 flex-col overflow-hidden bg-[#222] text-[#ccc]">
      <div className="flex h-[22px] shrink-0 items-center whitespace-nowrap bg-[#303030] pl-[4px] text-[9.500px] font-semibold text-white">
        <span className="relative z-20">Template window</span>
      </div>
      <div className="h-[5px] shrink-0 bg-[#1b1b1b]" />
      <div className="flex h-[17px] shrink-0 items-center bg-[#424242] pl-[8px]">
        <div className="relative z-20"><I n="search" c="size-[9px]" /></div>
      </div>
      <div className="flex h-[18px] shrink-0 items-center whitespace-nowrap bg-[#262626] pl-[4px] pt-px text-[8.200px] text-[#5f8f92]">
        <span className="relative z-20 w-[11px] shrink-0">T...</span>
        <span className="relative z-20">TEMPLATE NAME</span>
      </div>
      <div className="relative z-20 flex flex-col">
        {tree.map(([d, icon, label, arrow], i) => (
          <div key={i} className={`flex h-[11.607px] shrink-0 items-center whitespace-nowrap text-[7.900px] ${indents[d]} ${i === 0 ? "border-y border-[#383838] bg-[#1a2426]" : ""}`}>
            <div className="flex w-[10px] shrink-0 justify-center">
              {arrow ? <I n={arrow} c="size-[8px]" /> : <div className="h-px w-[4px] bg-[#383838]" />}
            </div>
            <I n={icon} c="size-[10px]" />
            <span className="pl-[3px]">{label}</span>
          </div>
        ))}
      </div>
      <div className="mt-[1px] flex h-[11px] shrink-0 bg-[#4d4d4d]">
        <div className="flex w-[12px] items-center justify-center bg-[#353535]"><I n="prev" c="size-[10px]" /></div>
      </div>
      <div className="flex grow items-center bg-[#1b1d1b] pl-[12px] pt-[2px]"><I n="tree" c="size-[12px]" /></div>
    </div>
  );
}

function StatusBar() {
  return (
    <div className="flex h-[15px] shrink-0 items-center bg-[#1f1f1f] pt-px text-[8.200px] text-[#ccc]">
      <div className="ml-[773px] w-[38px] whitespace-nowrap">Position:</div>
      <div className="w-[52px]">00:00:00.566</div>
      <div className="w-[59px] whitespace-nowrap">Start selection:</div>
      <div className="w-[52px]">00:00:00.000</div>
      <div className="w-[57px] whitespace-nowrap">End selection:</div>
      <div className="w-[52px]">00:00:00.000</div>
      <div className="flex h-full w-[23px] items-center justify-center bg-[#333]"><I n="locate" /></div>
      <div className="ml-[33px] h-px w-[5px] bg-[#555]" />
      <div className="h-[6px] w-[6px] bg-[#666]" />
    </div>
  );
}

const marks = [
  { ch: "S", x: 1069, y: 87, w: 38 },
  { ch: "A", x: 1113, y: 87, w: 43 },
  { ch: "I", x: 1164, y: 87, w: 21 },
  { ch: "F", x: 1195, y: 87, w: 36 },
  { ch: "E", x: 1058, y: 150, w: 39 },
  { ch: "D", x: 1104, y: 150, w: 39 },
  { ch: "I", x: 1150, y: 150, w: 20 },
  { ch: "T", x: 1178, y: 150, w: 38 },
];

function Watermark() {
  return (
    <svg viewBox="1020 0 195 200" className="absolute left-[955px] top-0 z-10 h-[200px] w-[195px]">
      <defs>
        <filter id="rough" x="-20%" y="-20%" width="140%" height="140%">
          <feTurbulence type="fractalNoise" baseFrequency="0.15" numOctaves="4" seed="4" />
          <feDisplacementMap in="SourceGraphic" scale="18" />
        </filter>
        <linearGradient id="letters" gradientUnits="userSpaceOnUse" x1="0" y1="40" x2="0" y2="155">
          <stop offset="0" stopColor="#646464" />
          <stop offset=".7" stopColor="#6c6c6c" />
          <stop offset=".74" stopColor="#858585" />
          <stop offset="1" stopColor="#959595" />
        </linearGradient>
      </defs>
      <path d="M1063 0h152v40h-152z" fill="#0b2a2c" opacity=".15" />
      <path d="M1063 40h152v65h-12l-58 19v36h-82V95l-32-40 16-15z" fill="#093f43" />
      <path d="M1063 124h82v36h-82zM1122 160h42l-12 20-8 8z" fill="#0a4f54" />
      <path d="M1145 105h70v60h-45l-10 15-15-8z" fill="#072c2e" opacity=".8" />
      <path d="M1145 126h70v3h-70zM1145 147h70v3h-70z" fill="#333" opacity=".6" />
      <g filter="url(#rough)" fill="#061214" opacity=".85">
        <path d="M1078 0h22v44h-18zM1076 92h28l-4 32h-18zM1186 40h30v16h-28zM1160 96h40l14 12h-54zM1142 128h10v26h-10zM1172 12h24v26h-20zM1188 60h10v34h-10zM1170 120h10v34h-8zM1200 102h14v14h-14zM1082 120h8v20h-8z" />
      </g>
      {[7, 5.5].map((w, i) =>
        marks.map((m) => (
          <text
            key={m.x + w}
            x={m.x}
            y={m.y}
            fontSize="59"
            textLength={m.w}
            lengthAdjust="spacingAndGlyphs"
            strokeWidth={w}
            strokeLinejoin="round"
            fill={i ? "url(#letters)" : "#4f4a33"}
            stroke={i ? "url(#letters)" : "#4f4a33"}
            className="font-['Liberation_Serif',serif] font-bold tracking-[0px]"
          >
            {m.ch}
          </text>
        ))
      )}
      <path d="M1207 14h6v1.500h-6z" fill="#ccc" />
      <path d="M1199 27h9v9h-9z" fill="#bfe5e8" />
      <path d="M1204 27v9M1204 31h4" stroke="#28777c" />
      <path d="M1131 132l5-5 5 5z" fill="#eee" />
      <path d="M1131 135.500h11" stroke="#777" />
    </svg>
  );
}

export default function App() {
  return (
    <div className="h-[720px] w-[1280px] overflow-hidden bg-black pl-[65px] font-['Open_Sans','Noto_Sans',sans-serif] leading-none tracking-[-0.2px]">
      <div className="relative flex h-[720px] w-[1150px] flex-col overflow-hidden bg-[#303030]">
        <TitleBar />
        <Tabs />
        <Ribbon />
        <div className="flex h-[594px] shrink-0">
          <LeftStrip />
          <div className="ml-[4px] flex w-[1035px] shrink-0 flex-col">
            <div className="flex h-[395px] shrink-0">
              <Properties />
              <Stage />
            </div>
            <Timeline />
          </div>
          <div className="w-[3px] shrink-0" />
          <TemplatePanel />
        </div>
        <StatusBar />
        <div className="flex h-[5px] shrink-0">
          <div className="w-[180px] bg-[#f2f2f2]" />
          <div className="grow bg-[#cfe0e4]" />
        </div>
        <div className="h-[2px] shrink-0 bg-black" />
        <Watermark />
        {/* hand cursor over the ruler start */}
        <svg viewBox="0 0 12 16" className="absolute left-[206px] top-[545px] h-[16px] w-[11px]">
          <path d="M3 1.500a1 1 0 0 1 2 0V6l5 1.500c1 .4 1 1 .8 2L10 14H4L.8 9.500c0-1.200 1.200-1.200 2.200 0z" fill="#f4f4f4" stroke="#555" strokeWidth=".6" />
        </svg>
      </div>
    </div>
  );
}
